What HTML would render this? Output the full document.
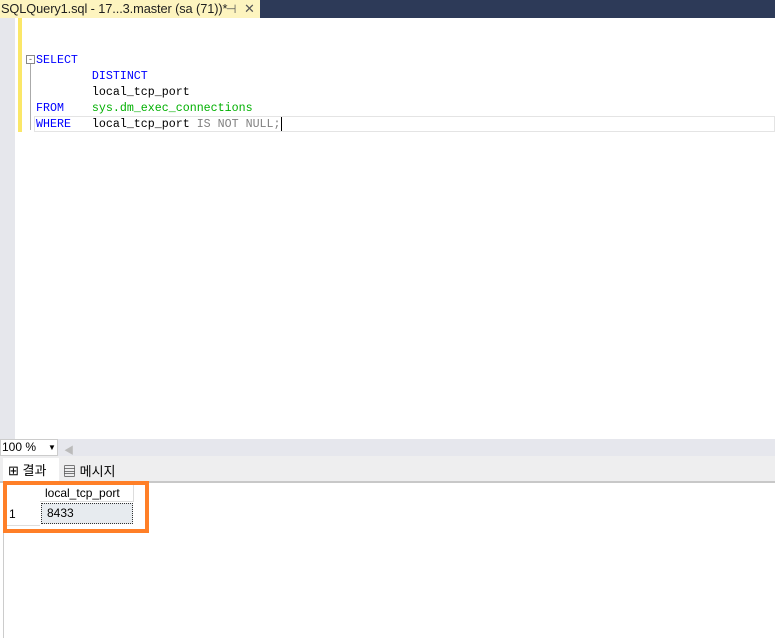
<!DOCTYPE html>
<html><head><meta charset="utf-8"><style>
body{margin:0;width:775px;height:638px;overflow:hidden;background:#fff;position:relative;font-family:"Liberation Sans","Noto Sans CJK KR",sans-serif}
div{position:absolute;box-sizing:border-box}
.code{font-family:"Liberation Mono","DejaVu Sans Mono",monospace;font-size:11.65px;white-space:pre;line-height:16px}
</style></head><body>
<div style="left:0;top:0;width:775px;height:18px;background:#2d3a58"></div>
<div style="left:0;top:0;width:260px;height:18px;background:#fdf4bf;font-size:12.8px;line-height:18px;color:#1e1e1e;padding-left:1px;white-space:nowrap;letter-spacing:-0.1px">SQLQuery1.sql - 17...3.master (sa (71))*<span style="position:absolute;left:226px;color:#555;font-size:12px">⊣</span><span style="position:absolute;left:244px;color:#555;font-size:13px">✕</span></div>
<div style="left:0;top:18px;width:15px;height:421px;background:#e6e7ec"></div>
<div style="left:18px;top:18px;width:4px;height:114px;background:#fbe768"></div>
<div style="left:26px;top:55px;width:9px;height:9px;border:1px solid #888;font-size:9px;line-height:6px;text-align:center;color:#555">-</div>
<div style="left:30px;top:64px;width:1px;height:66px;background:#aaa"></div>
<div style="left:34px;top:116px;width:741px;height:16px;border:1px solid #e4e4e4"></div>
<div class="code" style="left:36px;top:53px;color:#000"><span style="color:#0000ff">SELECT</span>
        <span style="color:#0000ff">DISTINCT</span>
        local_tcp_port
<span style="color:#0000ff">FROM</span>    <span style="color:#00b000">sys.dm_exec_connections</span>
<span style="color:#0000ff">WHERE</span>   local_tcp_port <span style="color:#808080">IS NOT NULL;</span></div>
<div style="left:281px;top:117px;width:1px;height:14px;background:#000"></div>
<div style="left:0;top:439px;width:775px;height:17px;background:#e6e7ed"></div>
<div style="left:0;top:439px;width:58px;height:17px;background:#fff;border:1px solid #ccc;font-size:12px;line-height:15px;padding-left:1px">100 %<span style="position:absolute;left:47px;font-size:8px">▼</span></div>
<div style="left:64px;top:442px;font-size:10px;color:#bbb">◀</div>
<div style="left:0;top:456px;width:775px;height:27px;background:#eeeeef;border-bottom:2px solid #c8c8c8"></div>
<div style="left:3px;top:458px;width:56px;height:25px;background:#fff;font-size:13px;line-height:25px;padding-left:5px">⊞ 결과</div>
<div style="left:63px;top:459px;font-size:13px;line-height:25px">▤ 메시지</div>
<div style="left:3px;top:483px;width:0;height:155px;border-left:1px solid #ccc"></div>
<div style="left:6px;top:485px;width:128px;height:41px;background:#fff"></div>
<div style="left:40px;top:485px;width:94px;height:17px;border-right:1px solid #ddd;border-bottom:1px solid #ddd;font-size:12px;line-height:17px;padding-left:5px">local_tcp_port</div>
<div style="left:6px;top:502px;width:34px;height:24px;border-bottom:1px solid #ddd;font-size:12px;line-height:24px;padding-left:3px">1</div>
<div style="left:41px;top:503px;width:92px;height:21px;background:#e7ebef;border:1px dotted #333;font-size:12px;line-height:19px;padding-left:5px">8433</div>
<div style="left:3px;top:481px;width:146px;height:52px;border:4px solid #ff7f27"></div>
</body></html>
